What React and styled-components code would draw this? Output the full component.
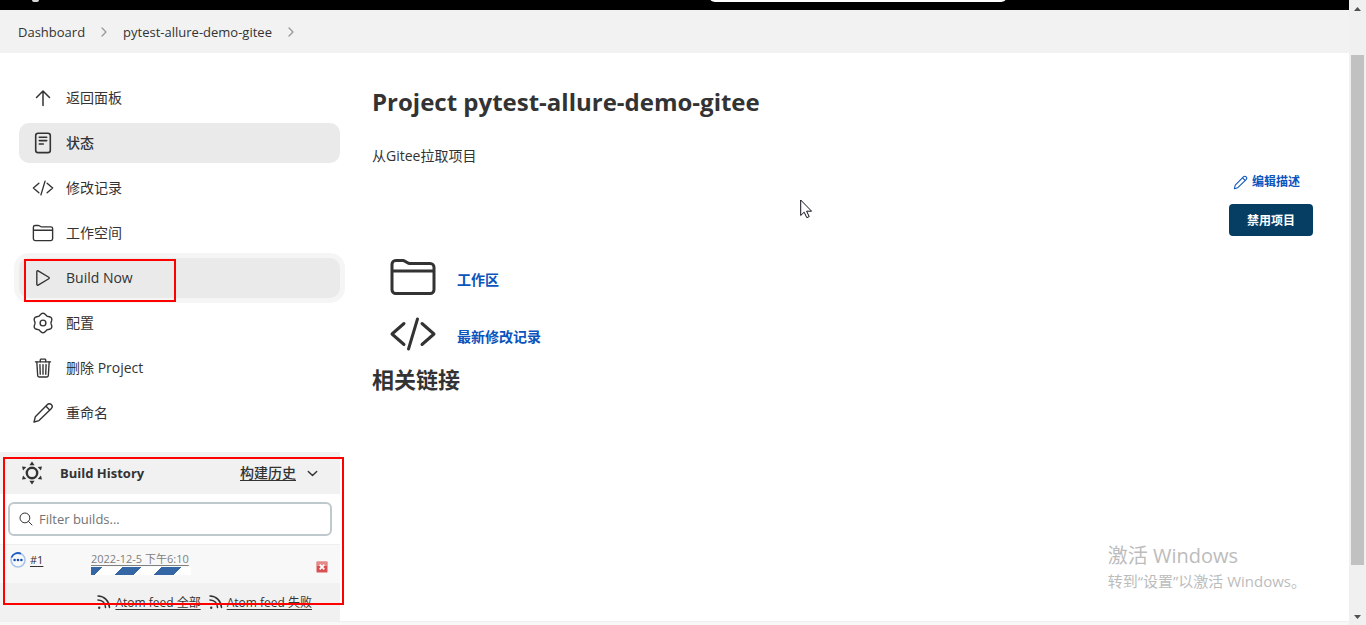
import React, { useState } from "react";
import styled, { createGlobalStyle, css } from "styled-components";
import {
  IoChevronDownOutline,
  IoChevronForwardOutline,
  IoCodeSlashOutline,
  IoFolderOutline,
  IoPlayOutline,
  IoSearchOutline,
  IoTrashOutline,
} from "react-icons/io5";

const GlobalStyle = createGlobalStyle`
  *, *::before, *::after {
    box-sizing: border-box;
  }

  body {
    margin: 0;
    overflow: hidden;
    background-color: #ffffff;
    color: #333333;
    font-family: "Open Sans", "Noto Sans CJK SC", sans-serif;
    font-size: 14px;
    line-height: 20px;
  }

  svg {
    display: block;
    flex: none;
  }
`;

const Window = styled.div`
  position: relative;
  display: grid;
  grid-template-columns: minmax(0, 1fr) 17px;
  height: 100vh;
`;

const Page = styled.div`
  display: flex;
  flex-direction: column;
  min-height: 0;
  overflow: hidden;
`;

const TopBar = styled.header`
  display: flex;
  flex: none;
  align-items: flex-end;
  height: 10px;
  padding: 0 342px 8px 32px;
  overflow: hidden;
  background-color: #000000;
`;

const LogoBase = styled.span`
  width: 7px;
  height: 2px;
  border-radius: 0 0 2px 2px;
  background-color: #d8d8d8;
`;

const TopSearch = styled.input`
  width: 298px;
  height: 34px;
  margin-left: auto;
  border: none;
  border-radius: 6px;
  background-color: #ffffff;
`;

const Breadcrumbs = styled.nav`
  display: flex;
  flex: none;
  align-items: center;
  gap: 12px;
  height: 43px;
  padding: 0 18px;
  background-color: #f2f2f2;
  color: #999999;
`;

const Crumb = styled.a`
  color: #333333;
  font-size: 13px;
  font-weight: 500;
  text-decoration: none;
`;

const Content = styled.div`
  display: grid;
  flex: none;
  grid-template-columns: 340px minmax(0, 1fr);
`;

const SidePanel = styled.aside`
  display: flex;
  flex-direction: column;
  gap: 19px;
  padding-top: 25px;
`;

const Tasks = styled.nav`
  display: flex;
  flex-direction: column;
  gap: 5px;
  padding-left: 19px;
`;

const Task = styled.a`
  display: flex;
  align-items: center;
  gap: 12px;
  height: 40px;
  padding: 0 13px;
  border-radius: 10px;
  color: #333333;
  font-size: 14px;
  font-weight: ${(props) => (props.$active ? 500 : 400)};
  text-decoration: none;

  ${(props) =>
    (props.$active || props.$hovered) &&
    css`
      background-color: #eaeaea;
    `}

  ${(props) =>
    props.$hovered &&
    css`
      box-shadow: 0 0 0 5px #f5f5f5;
    `}
`;

const HistoryHeader = styled.div`
  display: flex;
  align-items: center;
  height: 42px;
  padding: 0 20px;
  background-color: #f1f1f1;
`;

const HistoryTitle = styled.h2`
  flex: 1;
  margin: 0 0 0 16px;
  font-size: 13px;
  font-weight: 700;
`;

const TrendLink = styled.a`
  display: flex;
  align-items: center;
  gap: 9px;
  color: #333333;
  font-weight: 500;
  text-underline-offset: 2px;
`;

const FilterRow = styled.div`
  padding: 8px;
`;

const FilterBox = styled.label`
  display: flex;
  align-items: center;
  gap: 5px;
  height: 34px;
  padding: 0 8px;
  border: 2px solid #bfc8cc;
  border-radius: 6px;
  background-color: #ffffff;
`;

const FilterInput = styled.input`
  flex: 1;
  min-width: 0;
  padding: 0;
  border: none;
  outline: none;
  background: none;
  color: #333333;
  font-family: inherit;
  font-size: 13px;

  &::placeholder {
    color: #737373;
  }
`;

const BuildTable = styled.table`
  width: 100%;
  border-collapse: collapse;
  border-top: 1px solid #efefef;
  background-color: #f8f8f8;
`;

const BuildCell = styled.td`
  width: ${(props) => props.$width};
  padding: ${(props) => props.$padding};
  vertical-align: top;
  font-size: 11px;
  line-height: 16px;
`;

const BuildName = styled.div`
  display: flex;
  align-items: center;
  gap: 4px;
`;

const BuildLink = styled.a`
  color: ${(props) => (props.$muted ? "#808080" : "#333333")};
  text-underline-offset: 2px;
`;

const ProgressBar = styled.div`
  width: 100px;
  height: 8px;
  background: repeating-linear-gradient(
    135deg,
    #3465a4 0 8px,
    #ffffff 8px 22px,
    #3465a4 22px 28px
  );
`;

const StopButton = styled.button`
  display: block;
  padding: 0;
  border: none;
  background: none;
  cursor: pointer;
`;

const Feeds = styled.div`
  display: flex;
  justify-content: flex-end;
  align-items: center;
  gap: 8px;
  height: 38px;
  padding: 2px 28px 0 0;
  background-color: #f1f1f1;
`;

const FeedLink = styled.a`
  display: flex;
  align-items: center;
  gap: 4px;
  color: #333333;
  font-size: 12px;
  text-underline-offset: 2px;
`;

const Main = styled.main`
  padding: 32px 36px 0 32px;
`;

const Title = styled.h1`
  margin: 0 0 26px;
  font-size: 24px;
  font-weight: 700;
  line-height: 34px;
`;

const Description = styled.p`
  margin: 0;
  font-size: 14px;
  line-height: 22px;
`;

const Actions = styled.div`
  display: flex;
  flex-direction: column;
  align-items: flex-end;
  gap: 12px;
  margin-top: 5px;
`;

const EditLink = styled.a`
  display: flex;
  align-items: center;
  gap: 4px;
  padding-right: 13px;
  color: #0b53bd;
  font-size: 12px;
  font-weight: 700;
  text-decoration: none;
`;

const DisableButton = styled.button`
  height: 32px;
  padding: 0 18px;
  border: none;
  border-radius: 4px;
  background-color: #063e63;
  color: #ffffff;
  font-family: inherit;
  font-size: 12px;
  font-weight: 700;
  cursor: pointer;
`;

const Shortcuts = styled.div`
  display: flex;
  flex-direction: column;
  gap: 9px;
  margin: 17px 0 0 17px;
`;

const Shortcut = styled.a`
  display: flex;
  align-items: center;
  gap: 20px;
  color: #0b53bd;
  font-size: 14px;
  font-weight: 700;
  text-decoration: none;

  svg {
    color: #333333;
  }
`;

const ShortcutLabel = styled.span`
  padding-top: 6px;
`;

const Related = styled.h2`
  margin: 6px 0 0;
  font-size: 22px;
  font-weight: 700;
  line-height: 30px;
`;

const Footer = styled.footer`
  flex: 1;
  border-top: 1px solid #f0f0f0;
  background-color: #f8f8f8;
`;

const Scrollbar = styled.div`
  display: flex;
  flex-direction: column;
  background-color: #f0f0f0;
`;

const ScrollArrow = styled.button`
  display: flex;
  align-items: center;
  justify-content: center;
  height: 17px;
  padding: 0;
  border: none;
  background: none;
`;

const ScrollSpace = styled.div`
  flex: ${(props) => props.$grow} 0 0;
`;

const ScrollThumb = styled.div`
  flex: 510 0 0;
  margin: 0 2px;
  background-color: #c1c1c1;
`;

const Highlight = styled.div`
  position: absolute;
  top: ${(props) => props.$top}px;
  left: ${(props) => props.$left}px;
  width: ${(props) => props.$width}px;
  height: ${(props) => props.$height}px;
  border: 2px solid #ff0000;
  pointer-events: none;
`;

const Watermark = styled.div`
  position: absolute;
  right: 60px;
  bottom: 33px;
  color: #bcbcbc;
  font-size: 15px;
  line-height: 22px;
`;

const WatermarkTitle = styled.div`
  font-size: 20px;
  line-height: 28px;
`;

const Pointer = styled.svg`
  position: absolute;
  top: 199px;
  left: 800px;
`;

const ArrowUpIcon = () => (
  <svg width="22" height="22" viewBox="0 0 22 22" fill="none" stroke="currentColor" strokeWidth="1.5" strokeLinecap="round" strokeLinejoin="round">
    <path d="M11 18.500V4M4.500 10.500L11 4l6.500 6.500" />
  </svg>
);

const DetailsIcon = () => (
  <svg width="22" height="22" viewBox="0 0 22 22" fill="none" stroke="currentColor" strokeWidth="1.6" strokeLinecap="round">
    <rect x="3.7" y="1.2" width="14.6" height="19.4" rx="2.4" />
    <path d="M7.3 5.2h7.4M7.3 8.6h7.4M7.3 12h4" />
  </svg>
);

// outline with six rounded lobes, one of them straight up
const gearPoints = Array.from({ length: 72 }, (_, i) => {
  const angle = (i * Math.PI) / 36;
  const radius = 8.9 + 0.9 * Math.cos(6 * angle);
  const x = 11 + radius * Math.sin(angle);
  const y = 11 - radius * Math.cos(angle);
  return `${x.toFixed(2)},${y.toFixed(2)}`;
}).join(" ");

const GearIcon = () => (
  <svg width="22" height="22" viewBox="0 0 22 22" fill="none" stroke="currentColor" strokeWidth="1.4" strokeLinejoin="round">
    <polygon points={gearPoints} />
    <circle cx="11" cy="11" r="2.9" />
  </svg>
);

const PencilIcon = ({ size = 22, strokeWidth = 1.4 }) => (
  <svg width={size} height={size} viewBox="0 0 22 22" fill="none" stroke="currentColor" strokeWidth={strokeWidth} strokeLinejoin="round">
    <path d="M2 20l1.3-5.2L15.2 2.700c1.200-1.200 3-1.200 4.100-.1s1.100 2.900-.1 4.100L7 18.600z" />
    <path d="M14 4.300l3.700 3.700" />
  </svg>
);

const SunIcon = () => (
  <svg width="24" height="24" viewBox="0 0 24 24" fill="currentColor">
    <circle cx="12" cy="12" r="5.2" fill="none" stroke="currentColor" strokeWidth="2.4" />
    <path d="M12 .5l2.6 3.700H9.400zM12 23.500l2.600-3.700H9.400zM2 5.500l4.300.6-3.200 3.500zM22 5.500l-4.300.6 3.200 3.500zM2 18.500l4.300-.6-3.200-3.500zM22 18.500l-4.300-.6 3.200-3.500z" />
  </svg>
);

const RunningIcon = () => (
  <svg width="16" height="16" viewBox="0 0 16 16" fill="none">
    <circle cx="8" cy="8" r="7" stroke="#a9c3ea" strokeWidth="1.6" />
    <path d="M1.5 5.5A7 7 0 0 1 11 1.700" stroke="#1f5fc4" strokeWidth="1.8" />
    <g fill="#1450b4">
      <circle cx="4.600" cy="8" r="1.300" />
      <circle cx="8" cy="8" r="1.300" />
      <circle cx="11.400" cy="8" r="1.300" />
    </g>
  </svg>
);

const StopIcon = () => (
  <svg width="12" height="12" viewBox="0 0 12 12">
    <rect x=".5" y=".5" width="11" height="11" rx="1" fill="#d85050" stroke="#e8a8a8" />
    <path d="M1 1h10v4H1z" fill="#e58888" />
    <path d="M3.700 3.700l4.600 4.600M8.300 3.700L3.700 8.300" stroke="#ffffff" strokeWidth="1.800" />
  </svg>
);

const FeedIcon = () => (
  <svg width="14" height="16" viewBox="0 0 14 16" fill="none" stroke="currentColor" strokeWidth="1.5" strokeLinecap="round">
    <path d="M1 1c6.500.2 11 5 11.500 11.500M1 5c4.400.2 7.200 3.200 7.500 7.500" />
    <circle cx="2.200" cy="12.800" r="1.200" fill="currentColor" stroke="none" />
  </svg>
);

const tasks = [
  { name: "返回面板", icon: <ArrowUpIcon /> },
  { name: "状态", icon: <DetailsIcon />, active: true },
  { name: "修改记录", icon: <IoCodeSlashOutline size={22} /> },
  { name: "工作空间", icon: <IoFolderOutline size={22} /> },
  { name: "Build Now", icon: <IoPlayOutline size={22} />, hovered: true },
  { name: "配置", icon: <GearIcon /> },
  { name: "删除 Project", icon: <IoTrashOutline size={22} /> },
  { name: "重命名", icon: <PencilIcon /> },
];

const builds = [{ id: 1, date: "2022-12-5 下午6:10" }];

const App = () => {
  const [filter, setFilter] = useState("");

  return (
    <Window>
      <GlobalStyle />
      <Page>
        <TopBar>
          <LogoBase />
          <TopSearch type="search" aria-label="Search" />
        </TopBar>
        <Breadcrumbs>
          <Crumb href="#dashboard">Dashboard</Crumb>
          <IoChevronForwardOutline size={14} />
          <Crumb href="#project">pytest-allure-demo-gitee</Crumb>
          <IoChevronForwardOutline size={14} />
        </Breadcrumbs>
        <Content>
          <SidePanel>
            <Tasks>
              {tasks.map((task) => (
                <Task
                  key={task.name}
                  href="#task"
                  $active={task.active}
                  $hovered={task.hovered}
                >
                  {task.icon}
                  {task.name}
                </Task>
              ))}
            </Tasks>
            <section>
              <HistoryHeader>
                <SunIcon />
                <HistoryTitle>Build History</HistoryTitle>
                <TrendLink href="#trend">
                  构建历史
                  <IoChevronDownOutline size={15} />
                </TrendLink>
              </HistoryHeader>
              <FilterRow>
                <FilterBox>
                  <IoSearchOutline size={16} />
                  <FilterInput
                    type="text"
                    aria-label="Filter builds"
                    placeholder="Filter builds..."
                    value={filter}
                    onChange={(e) => setFilter(e.target.value)}
                  />
                </FilterBox>
              </FilterRow>
              <BuildTable>
                <tbody>
                  {builds.map((build) => (
                    <tr key={build.id}>
                      <BuildCell $width="91px" $padding="7px 0 0 10px">
                        <BuildName>
                          <RunningIcon />
                          <BuildLink href="#build">#{build.id}</BuildLink>
                        </BuildName>
                      </BuildCell>
                      <BuildCell $padding="6px 0 8px">
                        <BuildLink href="#build" $muted>
                          {build.date}
                        </BuildLink>
                        <ProgressBar role="progressbar" aria-label="Build progress" />
                      </BuildCell>
                      <BuildCell $width="24px" $padding="16px 0 0">
                        <StopButton aria-label="Stop build">
                          <StopIcon />
                        </StopButton>
                      </BuildCell>
                    </tr>
                  ))}
                </tbody>
              </BuildTable>
              <Feeds>
                <FeedLink href="#all">
                  <FeedIcon />
                  Atom feed 全部
                </FeedLink>
                <FeedLink href="#failed">
                  <FeedIcon />
                  Atom feed 失败
                </FeedLink>
              </Feeds>
            </section>
          </SidePanel>
          <Main>
            <Title>Project pytest-allure-demo-gitee</Title>
            <Description>从Gitee拉取项目</Description>
            <Actions>
              <EditLink href="#edit">
                <PencilIcon size={15} strokeWidth={1.5} />
                编辑描述
              </EditLink>
              <DisableButton>禁用项目</DisableButton>
            </Actions>
            <Shortcuts>
              <Shortcut href="#workspace">
                <IoFolderOutline size={48} />
                <ShortcutLabel>工作区</ShortcutLabel>
              </Shortcut>
              <Shortcut href="#changes">
                <IoCodeSlashOutline size={48} />
                <ShortcutLabel>最新修改记录</ShortcutLabel>
              </Shortcut>
            </Shortcuts>
            <Related>相关链接</Related>
          </Main>
        </Content>
        <Footer />
      </Page>
      <Scrollbar>
        <ScrollArrow aria-label="Scroll up">
          <svg width="7" height="4" viewBox="0 0 7 4" fill="#505050">
            <path d="M0 4L3.5 0 7 4z" />
          </svg>
        </ScrollArrow>
        <ScrollSpace $grow={38} />
        <ScrollThumb />
        <ScrollSpace $grow={43} />
        <ScrollArrow aria-label="Scroll down">
          <svg width="7" height="4" viewBox="0 0 7 4" fill="#505050">
            <path d="M0 0l3.5 4L7 0z" />
          </svg>
        </ScrollArrow>
      </Scrollbar>
      <Highlight $top={259} $left={24} $width={152} $height={43} />
      <Highlight $top={457} $left={3} $width={341} $height={148} />
      <Watermark>
        <WatermarkTitle>激活 Windows</WatermarkTitle>
        转到“设置”以激活 Windows。
      </Watermark>
      <Pointer width="13" height="20" viewBox="0 0 13 20" fill="#ffffff" stroke="#10101c">
        <path d="M.7 1v15.500l3.500-3.300 2.600 5.500 2.400-1.100-2.600-5.400h5z" />
      </Pointer>
    </Window>
  );
};

export default App;
